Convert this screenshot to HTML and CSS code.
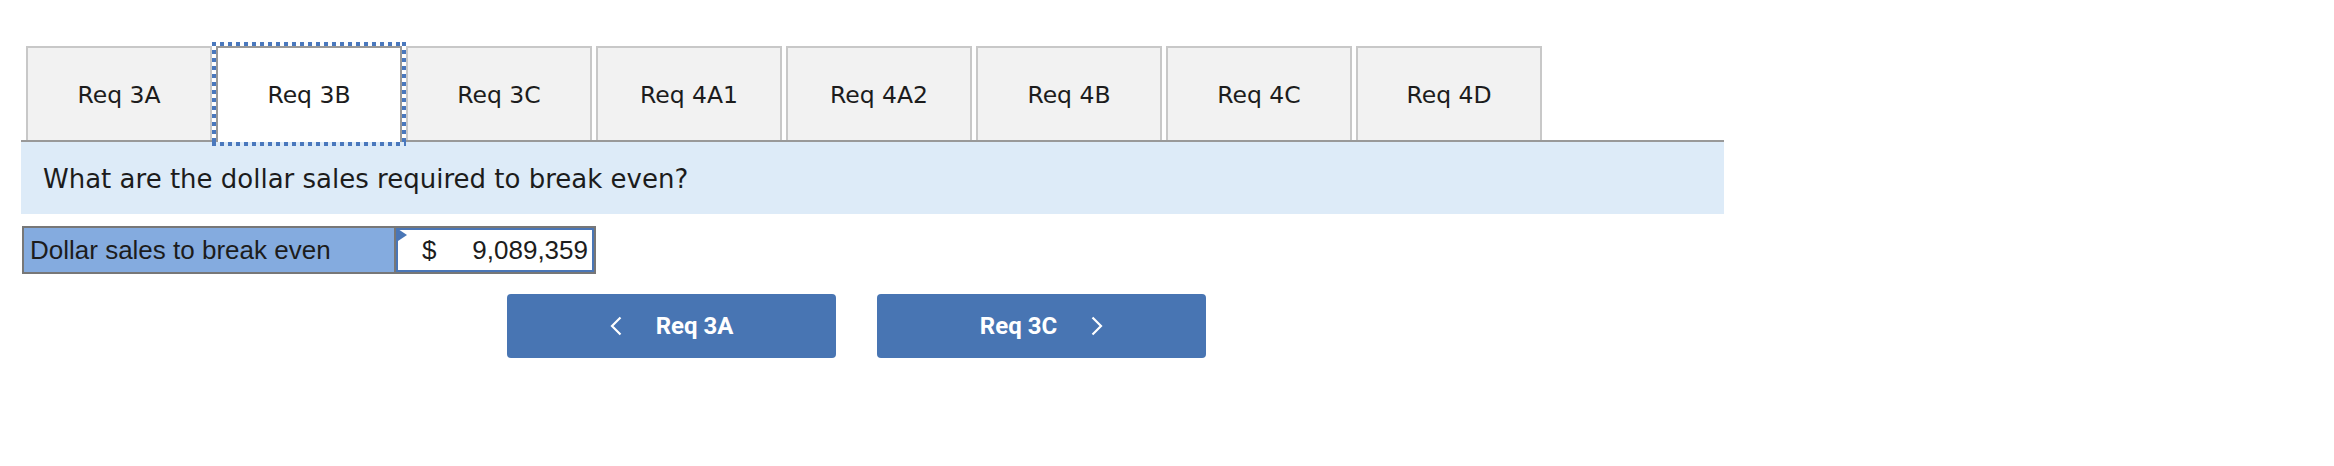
FILE: index.html
```html
<!DOCTYPE html>
<html lang="en">
<head>
    <meta charset="UTF-8">
    <title>Req 3B</title>
    <link rel="stylesheet" href="styles.css">
</head>
<body>
    <div class="page">
        <div class="tab-row">
            <div class="tab">Req 3A</div>
            <div class="tab active">Req 3B</div>
            <div class="tab">Req 3C</div>
            <div class="tab">Req 4A1</div>
            <div class="tab">Req 4A2</div>
            <div class="tab">Req 4B</div>
            <div class="tab">Req 4C</div>
            <div class="tab">Req 4D</div>
        </div>

        <div class="question">What are the dollar sales required to break even?</div>

        <div class="answer-row">
            <div class="answer-label">Dollar sales to break even</div>
            <div class="answer-input">
                <span>$</span>
                <span>9,089,359</span>
            </div>
        </div>

        <div class="nav-buttons">
            <button class="nav-button">
                <svg class="chevron" width="12" height="20" viewBox="0 0 12 20"><path d="M10.5 1.5 L2 10 L10.5 18.5" /></svg>
                <span>Req 3A</span>
            </button>
            <button class="nav-button">
                <span>Req 3C</span>
                <svg class="chevron" width="12" height="20" viewBox="0 0 12 20"><path d="M1.5 1.5 L10 10 L1.5 18.5" /></svg>
            </button>
        </div>
    </div>
</body>
</html>
```

FILE: styles.css
```css
body {
    margin: 0;
    background: #fff;
    color: #1c1c1c;
}

.page {
    padding: 46px 0 0 21px;
}

/* tabs */
.tab-row {
    display: flex;
    gap: 4px;
    width: 1698px;
    padding-left: 5px;
    border-bottom: 2px solid #999;
}

.tab {
    box-sizing: border-box;
    width: 186px;
    height: 94px;
    display: flex;
    justify-content: center;
    align-items: center;
    padding-top: 1px;
    background-color: #f2f2f2;
    border: 2px solid #c8c8c8;
    border-bottom: none;
    font-family: "DejaVu Sans", Verdana, sans-serif;
    font-size: 23.5px;
    color: #1c1c1c;
}

.tab.active {
    position: relative;
    height: 96px;
    margin-bottom: -2px;
    padding-top: 0;
    padding-bottom: 1px;
    background-color: #fff;
    border-color: #999;
}

.tab.active::before {
    content: "";
    position: absolute;
    left: -6px;
    right: -6px;
    top: -6px;
    bottom: -4px;
    background:
        repeating-linear-gradient(90deg, #4a78bd 0 4px, transparent 4px 8px) top / 100% 4px no-repeat,
        repeating-linear-gradient(90deg, #4a78bd 0 4px, transparent 4px 8px) bottom / 100% 4px no-repeat,
        repeating-linear-gradient(180deg, #4a78bd 0 4px, transparent 4px 8px) left / 4px 100% no-repeat,
        repeating-linear-gradient(180deg, #4a78bd 0 4px, transparent 4px 8px) right / 4px 100% no-repeat;
}

/* question */
.question {
    box-sizing: border-box;
    width: 1703px;
    height: 72px;
    display: flex;
    align-items: center;
    padding-left: 22px;
    padding-top: 2px;
    background-color: #ddebf8;
    font-family: "DejaVu Sans", Verdana, sans-serif;
    font-size: 26px;
    color: #1c1c1c;
}

/* answer */
.answer-row {
    display: inline-flex;
    margin-top: 12px;
    margin-left: 1px;
    border: 2px solid #777;
    font-family: "Liberation Sans", Arial, sans-serif;
    font-size: 26px;
}

.answer-label {
    box-sizing: border-box;
    width: 372px;
    height: 44px;
    display: flex;
    align-items: center;
    padding-left: 6px;
    background-color: #84abdf;
    border-right: 2px solid #777;
}

.answer-input {
    position: relative;
    box-sizing: border-box;
    width: 198px;
    height: 44px;
    display: flex;
    justify-content: space-between;
    align-items: center;
    padding: 0 4px 0 24px;
    background: #fff;
    border: 2px solid #4a76b6;
}

.answer-input::before {
    content: "";
    position: absolute;
    top: 0;
    left: 0;
    border-left: 9px solid #4a76b6;
    border-top: 6px solid transparent;
    border-bottom: 6px solid transparent;
    transform: translateY(-1px);
}

/* prev / next */
.nav-buttons {
    display: flex;
    gap: 41px;
    margin-top: 20px;
    margin-left: 486px;
}

.nav-button {
    width: 329px;
    height: 64px;
    display: flex;
    justify-content: center;
    align-items: center;
    gap: 34px;
    padding: 0;
    border: none;
    border-radius: 4px;
    background-color: #4875b3;
    color: #fff;
    font-family: Roboto, "Liberation Sans", sans-serif;
    font-weight: 700;
    font-size: 24px;
}

.chevron path {
    fill: none;
    stroke: #fff;
    stroke-width: 2.2;
}
```
